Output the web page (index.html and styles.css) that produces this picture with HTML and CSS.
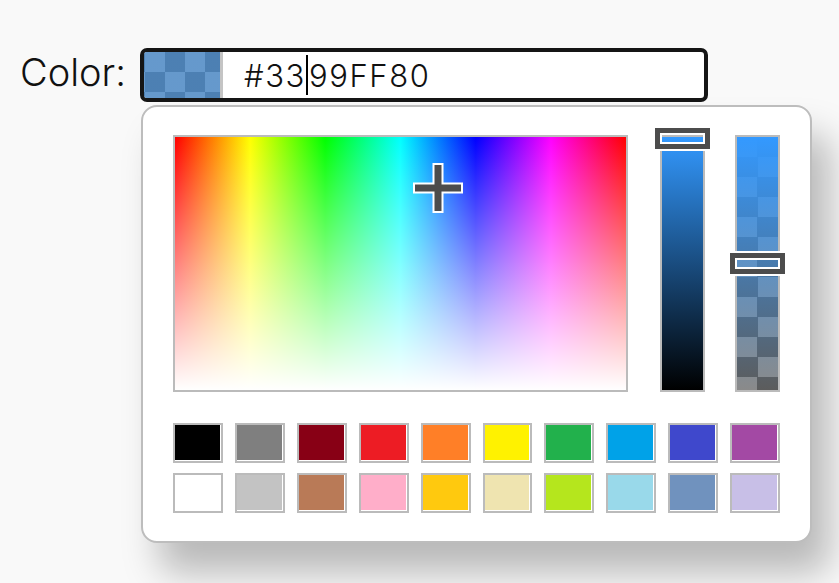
FILE: index.html
```html
<!DOCTYPE html>
<html>
<head>
<meta charset="utf-8">
<link rel="stylesheet" href="styles.css">
</head>
<body>
<div class="page">
  <div class="field">
    <span class="label">Color:</span>
    <div class="input">
      <div class="preview"></div>
      <div class="value"><span>#33</span><span class="caret"></span><span>99FF80</span></div>
    </div>
  </div>
  <div class="picker">
    <div class="top">
      <div class="pad">
        <svg class="cross" width="50" height="50" viewBox="0 0 50 50">
          <rect x="0" y="19.5" width="50" height="11" fill="#fff"/>
          <rect x="19.5" y="0" width="11" height="50" fill="#fff"/>
          <rect x="2" y="21.5" width="46" height="7" fill="#4c4c4c"/>
          <rect x="21.5" y="2" width="7" height="46" fill="#4c4c4c"/>
        </svg>
      </div>
      <div class="slider value-slider">
        <div class="thumb thumb-value"></div>
      </div>
      <div class="slider alpha-slider">
        <div class="thumb thumb-alpha"></div>
      </div>
    </div>
    <div class="palette">
      <div class="sw" style="background-color:#000000"></div>
      <div class="sw" style="background-color:#7f7f7f"></div>
      <div class="sw" style="background-color:#880015"></div>
      <div class="sw" style="background-color:#ed1c24"></div>
      <div class="sw" style="background-color:#ff7f27"></div>
      <div class="sw" style="background-color:#fff200"></div>
      <div class="sw" style="background-color:#22b14c"></div>
      <div class="sw" style="background-color:#00a2e8"></div>
      <div class="sw" style="background-color:#3f48cc"></div>
      <div class="sw" style="background-color:#a349a4"></div>
      <div class="sw" style="background-color:#ffffff"></div>
      <div class="sw" style="background-color:#c3c3c3"></div>
      <div class="sw" style="background-color:#b97a57"></div>
      <div class="sw" style="background-color:#ffaec9"></div>
      <div class="sw" style="background-color:#ffc90e"></div>
      <div class="sw" style="background-color:#efe4b0"></div>
      <div class="sw" style="background-color:#b5e61d"></div>
      <div class="sw" style="background-color:#99d9ea"></div>
      <div class="sw" style="background-color:#7092be"></div>
      <div class="sw" style="background-color:#c8bfe7"></div>
    </div>
  </div>
</div>
</body>
</html>
```
FILE: styles.css
```css
html {
  margin: 0;
  padding: 0;
  background: #f9f9f9;
  overflow: hidden;
}
body {
  margin: 0;
  padding: 0;
  min-height: 583px;
  font-family: Inter, "Noto Sans", sans-serif;
  color: #111;
}
.page {
  padding: 48px 0 0 20px;
}
.field {
  display: flex;
  align-items: center;
}
.label {
  width: 120px;
  font-size: 38px;
  line-height: 1;
  font-weight: 300;
  margin-bottom: 6px;
}
.input {
  box-sizing: border-box;
  width: 568px;
  height: 54px;
  border: 4px solid #151515;
  border-radius: 7px;
  background: #fff;
  display: flex;
  align-items: center;
  overflow: hidden;
}
.preview {
  width: 76px;
  height: 100%;
  border-right: 3px solid #c4c4c4;
  background-color: #999;
  background-image:
    linear-gradient(rgba(51,153,255,.5), rgba(51,153,255,.5)),
    conic-gradient(#666 0 25%, #999 0 50%, #666 0 75%, #999 0);
  background-size: auto, 40px 40px;
  background-position: 1px 0, 1px 0;
}
.value {
  padding-left: 21px;
  font-size: 31px;
  line-height: 1;
  font-weight: 300;
  letter-spacing: 1.6px;
  display: flex;
  align-items: center;
}
.caret {
  width: 2px;
  height: 40px;
  background: #000;
  margin: 0 1px 0 0;
}
.picker {
  box-sizing: border-box;
  margin: 3px 0 0 121px;
  width: 671px;
  height: 438px;
  background: #fff;
  border: 2px solid #bdbdbd;
  border-radius: 16px;
  padding: 28px 30px 28px 30px;
  box-shadow: 18px 30px 36px rgba(0,0,0,0.26);
}
.top {
  display: flex;
  height: 257px;
}
.pad {
  position: relative;
  box-sizing: border-box;
  width: 455px;
  height: 257px;
  border: 2px solid #bbb;
  background-image:
    linear-gradient(to bottom, rgba(255,255,255,0), #fff),
    linear-gradient(to right, #f00, #ff0, #0f0, #0ff, #00f, #f0f, #f00);
}
.cross {
  position: absolute;
  left: 238px;
  top: 26px;
  display: block;
}
.slider {
  position: relative;
  box-sizing: border-box;
  width: 45px;
  height: 257px;
  border: 2px solid #bbb;
}
.value-slider {
  margin-left: 32px;
  background: linear-gradient(to bottom, #3399ff, #000);
}
.alpha-slider {
  margin-left: 30px;
  background-color: #8a8a8a;
  background-image:
    linear-gradient(to bottom, rgba(51,153,255,1), rgba(51,153,255,0)),
    conic-gradient(#5c5c5c 0 25%, #8a8a8a 0 50%, #5c5c5c 0 75%, #8a8a8a 0);
  background-size: auto, 41px 40px;
  background-position: 0 0, 0 0;
}
.thumb {
  position: absolute;
  box-sizing: border-box;
  width: 55px;
  height: 21px;
  left: -7px;
  border: 5px solid #4c4c4c;
  box-shadow: inset 0 0 0 2px #fff, 0 0 0 2px #fff;
}
.thumb-value {
  top: -9px;
}
.thumb-alpha {
  top: 116px;
}
.palette {
  margin-top: 31px;
  display: grid;
  grid-template-columns: repeat(10, 1fr);
  column-gap: 12px;
  row-gap: 10px;
}
.sw {
  box-sizing: border-box;
  height: 40px;
  border: 2px solid #bbb;
  box-shadow: inset -1px -1px 0 #fff;
}
```
